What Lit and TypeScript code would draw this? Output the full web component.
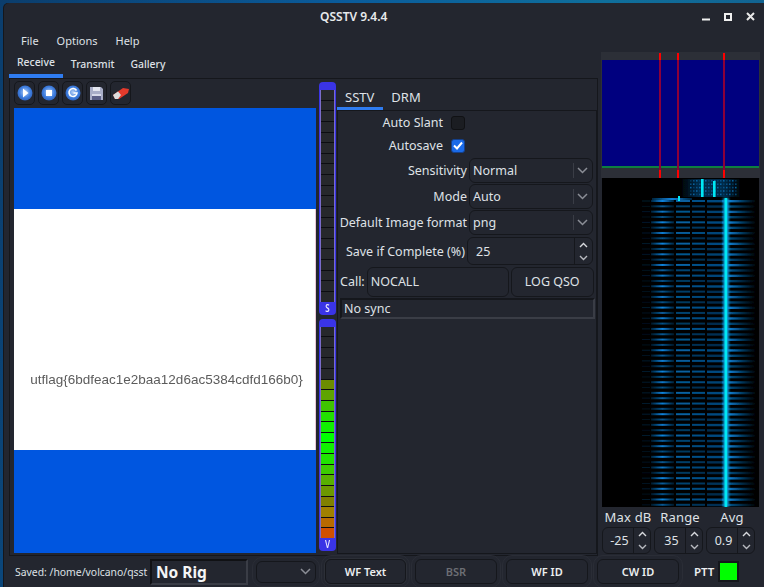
import { LitElement, css, html, svg } from 'lit';
import { customElement } from 'lit/decorators.js';

const chevronDown = html`<svg class="chev" width="11" height="7" viewBox="0 0 11 7"><path d="M1 1l4.5 4.5L10 1" fill="none" stroke="#8b8e96" stroke-width="1.5"/></svg>`;
const spinUp = html`<svg width="9" height="6" viewBox="0 0 9 6"><path d="M1 5l3.5-3.5L8 5" fill="none" stroke="#d8dade" stroke-width="1.4"/></svg>`;
const spinDown = html`<svg width="9" height="6" viewBox="0 0 9 6"><path d="M1 1l3.5 3.5L8 1" fill="none" stroke="#b8bac0" stroke-width="1.4"/></svg>`;

const rxLevels = Array.from({ length: 20 }, () => '#26282b');
const volLevels = [
  '#26282b', '#26282b', '#26282b', '#26282b', '#26282b',
  '#6c8c00', '#5ea400', '#3fc400', '#22e000', '#10f000',
  '#00ff00', '#10f000', '#20e400', '#3ccc00', '#58b000',
  '#6c9800', '#808000', '#a08000', '#b86a00', '#d05000',
];

@customElement('sig-meter')
export class SigMeter extends LitElement {
  static properties = { label: {}, levels: { attribute: false } };
  label = '';
  levels: string[] = [];

  static styles = css`
    :host {
      display: flex;
      flex-direction: column;
      width: 17px;
      flex: 1;
      border-radius: 4px;
      background: #3a34e6;
      overflow: hidden;
    }
    .cap {
      height: 8px;
      flex: none;
    }
    .bars {
      flex: 1;
      display: flex;
      flex-direction: column;
      margin: 0 1px;
      background: #0c0d10;
      border-left: 1px solid #7a6cc8;
      border-right: 1px solid #7a6cc8;
      gap: 1px;
    }
    .bars div {
      flex: 1;
    }
    .mark {
      height: 13px;
      flex: none;
      color: #e8e6ff;
      font: 600 10px/13px 'Noto Sans', sans-serif;
      text-align: center;
      transform: scaleX(0.8);
    }
  `;

  render() {
    return html`
      <div class="cap"></div>
      <div class="bars">
        ${this.levels.map((c) => html`<div style="background:${c}"></div>`)}
      </div>
      <div class="mark">${this.label}</div>
    `;
  }
}

function waterfallRows() {
  const rows = [];
  const dims = [1, 0.65, 0.9, 0.6, 1, 0.7, 0.95, 0.6];
  for (let i = 0; i < 58; i++) {
    const y = 22 + i * 5.33;
    const a = dims[i % dims.length];
    rows.push(svg`
      <rect x="49" y=${y} width="23" height="2" fill="url(#wfHead)" opacity=${a}/>
      <rect x="74" y=${y} width="14" height="2" fill="#07609f" opacity=${a}/>
      <rect x="90" y=${y} width="13" height="2" fill="#065088" opacity=${a}/>
      <rect x="105" y=${y} width="15" height="2.4" fill="#064a80" opacity=${a}/>
      <rect x="120" y=${y} width="34" height="2.4" fill="url(#wfTail)" opacity=${a}/>
      <rect x="40" y=${y + 0.5} width="8" height="1" fill="#03203a" opacity=${a * 0.8}/>
    `);
  }
  return rows;
}

function burstDots() {
  const dots = [];
  for (let r = 0; r < 5; r++) {
    for (let c = 0; c < 16; c++) {
      dots.push(svg`<rect x=${88 + c * 3} y=${2 + r * 3.4} width="1.6" height="1.6" fill="#0a6cb0" opacity=${0.35 + ((r + c) % 3) * 0.25}/>`);
    }
  }
  return dots;
}

@customElement('app-root')
export class AppRoot extends LitElement {
  static styles = css`
    :host {
      display: block;
      width: 764px;
      height: 587px;
      overflow: hidden;
      padding: 3px 0 0 4px;
      box-sizing: border-box;
      background: linear-gradient(100deg, #0b3d6c 0%, #0a5c9c 40%, #0f6f9c 70%, #145d8c 100%);
      font: 12.5px 'Noto Sans', sans-serif;
      color: #dfe1e6;
    }
    * {
      box-sizing: border-box;
    }
    .window {
      height: 584px;
      display: flex;
      flex-direction: column;
      background: #23262f;
      border-radius: 5px 0 0 0;
      box-shadow: -1px 0 0 #15171c;
    }
    .title {
      height: 27px;
      flex: none;
      display: flex;
      align-items: center;
      justify-content: flex-end;
      position: relative;
      padding-right: 9px;
      gap: 14px;
    }
    .title span {
      position: absolute;
      left: 316px;
      font-size: 12px;
      font-weight: 600;
      color: #e8eaec;
    }
    .menu {
      height: 21px;
      flex: none;
      display: flex;
      align-items: center;
      gap: 18px;
      padding-left: 17px;
      font-size: 11px;
    }
    .body {
      flex: 1;
      min-height: 0;
      display: flex;
      padding-left: 5px;
    }
    .left {
      width: 592px;
      display: flex;
      flex-direction: column;
    }
    .tabs {
      display: flex;
      flex: none;
      height: 27px;
      align-items: stretch;
      font-size: 10.4px;
      font-weight: 500;
    }
    .tabs div {
      display: flex;
      align-items: center;
      padding: 3px 8px 0;
      border-bottom: 4px solid transparent;
    }
    .tabs .on {
      border-bottom-color: #2f7cf0;
      padding: 0 8px 2px;
    }
    .pane {
      flex: 1;
      min-height: 0;
      display: flex;
      border: 1px solid #15171c;
      padding-left: 4px;
      margin-right: 3px;
    }
    .view {
      width: 302px;
      display: flex;
      flex-direction: column;
    }
    .toolbar {
      display: flex;
      gap: 3px;
      height: 29px;
      flex: none;
      padding-top: 2px;
    }
    .tool {
      width: 21px;
      height: 24px;
      border: 1px solid #15171c;
      border-radius: 5px;
      display: flex;
      align-items: center;
      justify-content: center;
    }
    .picture {
      height: 445px;
      display: flex;
      flex-direction: column;
      flex: none;
    }
    .blue {
      background: #0056e0;
    }
    .top-blue {
      height: 101px;
    }
    .bottom-blue {
      flex: 1;
    }
    .white {
      height: 241px;
      background: #fff;
      border-right: 1px solid #e8c8d8;
      display: flex;
      align-items: center;
      justify-content: center;
      padding: 100px 0 0 4px;
    }
    .flag {
      font: 13.5px 'Liberation Sans', sans-serif;
      color: #5c5c5c;
      filter: blur(0.5px);
      white-space: nowrap;
    }
    .meters {
      width: 17px;
      margin: 3px 1px 4px 3px;
      display: flex;
      flex-direction: column;
      gap: 4px;
      flex: none;
    }
    .side {
      flex: 1;
      display: flex;
      flex-direction: column;
      padding-top: 6px;
      min-width: 0;
    }
    .subtabs {
      height: 25px;
      flex: none;
      display: flex;
      font-size: 13px;
    }
    .subtabs div {
      padding: 0 8px;
      line-height: 25px;
    }
    .subtabs .on {
      border-bottom: 3px solid #2f7cf0;
      height: 25px;
      padding-right: 9px;
    }
    .frame {
      flex: 1;
      border: 1px solid #15171c;
      display: flex;
      flex-direction: column;
      padding: 0 3px 0 1px;
      margin-bottom: 1px;
    }
    .check {
      height: 23px;
      flex: none;
      display: flex;
      align-items: center;
      justify-content: flex-end;
      gap: 8px;
      padding-right: 128px;
    }
    .box {
      width: 14px;
      height: 14px;
      border: 1px solid #101114;
      border-radius: 3px;
      background: #1b1d22;
      display: flex;
      align-items: center;
      justify-content: center;
    }
    .box.on {
      background: #1a6ae8;
      border-color: #14408c;
    }
    .row {
      display: flex;
      align-items: center;
      justify-content: flex-end;
      gap: 2px;
      height: 26px;
      flex: none;
    }
    .row label {
      white-space: nowrap;
    }
    .combo {
      width: 124px;
      height: 25px;
      border: 1px solid #15171c;
      border-radius: 6px;
      display: flex;
      align-items: center;
      padding-left: 3px;
      justify-content: space-between;
      position: relative;
    }
    .combo .drop {
      width: 18px;
      height: 15px;
      border-left: 1px solid #3a3d46;
      display: flex;
      align-items: center;
      justify-content: center;
      margin-right: 1px;
    }
    .spin {
      display: flex;
      height: 28px;
      border: 1px solid #15171c;
      border-radius: 6px;
      align-items: center;
    }
    .spin .num {
      flex: 1;
      text-align: left;
    }
    .spin .arrows {
      align-self: stretch;
      display: flex;
      flex-direction: column;
      align-items: center;
      justify-content: space-around;
      border-left: 1px solid #15171c;
      width: 18px;
      flex: none;
    }
    .save {
      height: 28px;
      margin-top: 2px;
    }
    .save .spin {
      width: 126px;
      padding-left: 8px;
    }
    .call {
      height: 31px;
      margin-top: 1px;
      gap: 0;
      justify-content: flex-start;
      padding-left: 1px;
    }
    .input {
      width: 142px;
      height: 30px;
      flex: none;
      margin-left: 2px;
      border: 1px solid #15171c;
      border-radius: 6px;
      padding-left: 3px;
      display: flex;
      align-items: center;
    }
    .btn {
      border: 1px solid #15171c;
      border-radius: 6px;
      display: flex;
      align-items: center;
      justify-content: center;
    }
    .log {
      width: 83px;
      height: 30px;
      flex: none;
      margin-left: 2px;
    }
    .status {
      height: 21px;
      flex: none;
      margin: 1px 0 0 1px;
      border: 2px solid #15171c;
      border-right-color: #3a3d46;
      border-bottom-color: #3a3d46;
      width: 255px;
      padding-left: 2px;
      line-height: 17px;
    }
    .right {
      width: 160px;
      display: flex;
      flex-direction: column;
      padding-top: 1px;
    }
    .scope {
      height: 126px;
      flex: none;
      position: relative;
      display: flex;
      flex-direction: column;
      margin: 0 1px 0 0;
      background: #2c2f37;
      border: 1px solid #2c2f37;
      border-bottom: 0;
    }
    .navy {
      height: 108px;
      margin-top: 7px;
      background: #00007f;
      border-bottom: 2px solid #0d7f40;
    }
    .marker {
      position: absolute;
      top: 0;
      bottom: 0;
      width: 2px;
      background: linear-gradient(#f00 7px, #8b0038 7px, #8b0038 117px, #f00 117px);
    }
    .fall {
      display: block;
      margin: 0 2px 0 1px;
      flex: none;
      background: #000;
    }
    .stat-labels {
      display: grid;
      grid-template-columns: 52px 52px 52px;
      height: 20px;
      flex: none;
      text-align: center;
      line-height: 20px;
      font-size: 13px;
      letter-spacing: 0.2px;
      padding-left: 1px;
    }
    .stats {
      display: flex;
      gap: 3px;
      padding-left: 1px;
    }
    .stats .spin {
      width: 49px;
      height: 27px;
      justify-content: center;
      padding-left: 3px;
    }
    .stats .num {
      text-align: center;
    }
    .stats .arrows {
      width: 17px;
    }
    .bar {
      height: 31px;
      flex: none;
      display: flex;
      align-items: center;
      padding-left: 11px;
      font-size: 10.4px;
    }
    .saved {
      width: 135px;
      flex: none;
      white-space: nowrap;
    }
    .rig {
      width: 98px;
      height: 26px;
      flex: none;
      border: 2px solid #101114;
      border-right-color: #3a3d46;
      border-bottom-color: #3a3d46;
      font-size: 15.5px;
      font-weight: 700;
      line-height: 22px;
      padding-left: 4px;
      color: #f4f5f6;
    }
    .rig-combo {
      width: 60px;
      height: 22px;
      flex: none;
      margin-left: 8px;
      border: 1px solid #15171c;
      border-radius: 6px;
      display: flex;
      align-items: center;
      justify-content: flex-end;
      padding-right: 4px;
      outline: 1px solid #2a2d36;
      outline-offset: 3px;
    }
    .rig-combo .chev {
      margin-left: 4px;
    }
    .act {
      width: 82px;
      height: 25px;
      flex: none;
      font-size: 11px;
      font-weight: 600;
      color: #eceef0;
      margin-left: 9px;
      outline: 1px solid #2a2d36;
      outline-offset: 3px;
    }
    .act.first {
      width: 81px;
      box-shadow: 0 0 0 1px #2c2f37;
    }
    .act.off {
      color: #6c6e74;
    }
    .ptt {
      margin-left: 15px;
      font-weight: 600;
      font-size: 11.5px;
      color: #eceef0;
    }
    .led {
      width: 17px;
      height: 17px;
      margin-left: 6px;
      background: #00ff00;
      box-shadow: 0 0 0 2px #15171c;
      flex: none;
    }
  `;

  private marker(x: number) {
    return html`<div class="marker" style="left:${x}px"></div>`;
  }

  private playIcon(glyph: unknown) {
    return html`<svg width="16" height="16" viewBox="0 0 16 16">
      <circle cx="8" cy="8" r="7.5" fill="url(#orb)"/>
      ${glyph}
      <defs>
        <radialGradient id="orb" cx="0.5" cy="0.45" r="0.6">
          <stop offset="0" stop-color="#b8d0f4"/>
          <stop offset="0.6" stop-color="#3f7fe0"/>
          <stop offset="1" stop-color="#2c5cb4"/>
        </radialGradient>
      </defs>
    </svg>`;
  }

  render() {
    return html`
      <div class="window">
        <div class="title">
          <span>QSSTV 9.4.4</span>
          <svg width="8" height="8" viewBox="0 0 8 8"><rect y="5.5" width="8" height="2" fill="#f0f0f0"/></svg>
          <svg width="8" height="8" viewBox="0 0 8 8"><rect x="1" y="1" width="6" height="6" fill="none" stroke="#f0f0f0" stroke-width="2"/></svg>
          <svg width="9" height="9" viewBox="0 0 9 9"><path d="M1 1l7 7M8 1L1 8" stroke="#e8e8e8" stroke-width="2"/></svg>
        </div>
        <div class="menu"><span>File</span><span>Options</span><span>Help</span></div>
        <div class="body">
          <div class="left">
            <div class="tabs">
              <div class="on">Receive</div>
              <div>Transmit</div>
              <div>Gallery</div>
            </div>
            <div class="pane">
              <div class="view">
                <div class="toolbar">
                  <div class="tool">${this.playIcon(svg`<path d="M6 3.5v9L11.5 8z" fill="#fff"/>`)}</div>
                  <div class="tool">${this.playIcon(svg`<rect x="5" y="5" width="6" height="6" fill="#fff"/>`)}</div>
                  <div class="tool">${this.playIcon(svg`<path d="M11.5 5.5A4 4 0 1 0 12 8H8.5" fill="none" stroke="#fff" stroke-width="1.6"/>`)}</div>
                  <div class="tool">
                    <svg width="15" height="15" viewBox="0 0 15 15">
                      <path d="M1 1h11l2 2v11H1z" fill="#a9aec8"/>
                      <rect x="4" y="1" width="7" height="4" fill="#e4e6f0"/>
                      <rect x="3" y="8" width="9" height="6" fill="#5c6088"/>
                      <rect x="3" y="8" width="9" height="2" fill="#d8daea"/>
                    </svg>
                  </div>
                  <div class="tool">
                    <svg width="18" height="14" viewBox="0 0 18 14">
                      <path d="M1 9l10-7 6 1-1 4-9 6H3z" fill="#e43a2c"/>
                      <path d="M1 9l5-3.4 3 3.4-3 4H3z" fill="#dcdcdc"/>
                    </svg>
                  </div>
                </div>
                <div class="picture">
                  <div class="blue top-blue"></div>
                  <div class="white"><span class="flag">utflag{6bdfeac1e2baa12d6ac5384cdfd166b0}</span></div>
                  <div class="blue bottom-blue"></div>
                </div>
              </div>
              <div class="meters">
                <sig-meter label="S" .levels=${rxLevels}></sig-meter>
                <sig-meter label="V" .levels=${volLevels}></sig-meter>
              </div>
              <div class="side">
                <div class="subtabs">
                  <div class="on">SSTV</div>
                  <div>DRM</div>
                </div>
                <div class="frame">
                  <div class="check"><label>Auto Slant</label><div class="box"></div></div>
                  <div class="check">
                    <label>Autosave</label>
                    <div class="box on">
                      <svg width="10" height="9" viewBox="0 0 10 9"><path d="M1 4.5L4 7.5 9 1.5" fill="none" stroke="#fff" stroke-width="2"/></svg>
                    </div>
                  </div>
                  <div class="row"><label>Sensitivity</label><div class="combo">Normal<div class="drop">${chevronDown}</div></div></div>
                  <div class="row"><label>Mode</label><div class="combo">Auto<div class="drop">${chevronDown}</div></div></div>
                  <div class="row"><label>Default Image format</label><div class="combo">png<div class="drop">${chevronDown}</div></div></div>
                  <div class="row save">
                    <label>Save if Complete (%)</label>
                    <div class="spin"><span class="num">25</span><div class="arrows">${spinUp}${spinDown}</div></div>
                  </div>
                  <div class="row call">
                    <label>Call:</label>
                    <div class="input">NOCALL</div>
                    <div class="btn log">LOG QSO</div>
                  </div>
                  <div class="status">No sync</div>
                </div>
              </div>
            </div>
          </div>
          <div class="right">
            <div class="scope">
              <div class="navy"></div>
              ${this.marker(57)}${this.marker(75)}${this.marker(121)}
            </div>
            <svg class="fall" width="157" height="329" viewBox="0 0 157 329">
              <defs>
                <linearGradient id="wfHead">
                  <stop offset="0" stop-color="#02243e"/>
                  <stop offset="0.5" stop-color="#0c84de"/>
                  <stop offset="1" stop-color="#02243e"/>
                </linearGradient>
                <linearGradient id="wfTail">
                  <stop offset="0" stop-color="#0870b8"/>
                  <stop offset="0.25" stop-color="#0a78c8"/>
                  <stop offset="0.6" stop-color="#053c64"/>
                  <stop offset="1" stop-color="#000"/>
                </linearGradient>
                <linearGradient id="wfBurst">
                  <stop offset="0" stop-color="#000"/>
                  <stop offset="0.3" stop-color="#042a48"/>
                  <stop offset="0.7" stop-color="#042a48"/>
                  <stop offset="1" stop-color="#000"/>
                </linearGradient>
                <filter id="soft" x="-5%" y="-5%" width="110%" height="110%"><feGaussianBlur stdDeviation="0.5"/></filter>
                <filter id="glow" x="-200%" width="500%"><feGaussianBlur stdDeviation="1"/></filter>
              </defs>
              <g filter="url(#soft)">
                <rect x="78" y="1" width="62" height="18" fill="url(#wfBurst)"/>
                ${burstDots()}
                <rect x="50" y="20" width="40" height="2" fill="url(#wfHead)"/>
                ${waterfallRows()}
              </g>
              <rect x="121" y="20" width="6" height="309" fill="#0a90c8" filter="url(#glow)"/>
              <rect x="122.6" y="20" width="2.6" height="309" fill="#00e8f4"/>
              <rect x="99" y="1" width="2.6" height="18" fill="#00e8f4"/>
              <rect x="111" y="3" width="2.6" height="16" fill="#00e8f4"/>
              <rect x="76" y="18" width="2" height="5" fill="#00e8f4"/>
            </svg>
            <div class="stat-labels"><span>Max dB</span><span>Range</span><span>Avg</span></div>
            <div class="stats">
              <div class="spin"><span class="num">-25</span><div class="arrows">${spinUp}${spinDown}</div></div>
              <div class="spin"><span class="num">35</span><div class="arrows">${spinUp}${spinDown}</div></div>
              <div class="spin"><span class="num">0.9</span><div class="arrows">${spinUp}${spinDown}</div></div>
            </div>
          </div>
        </div>
        <div class="bar">
          <span class="saved">Saved: /home/volcano/qsst</span>
          <div class="rig">No Rig</div>
          <div class="rig-combo">${chevronDown}</div>
          <div class="btn act first">WF Text</div>
          <div class="btn act off">BSR</div>
          <div class="btn act">WF ID</div>
          <div class="btn act">CW ID</div>
          <span class="ptt">PTT</span>
          <div class="led"></div>
        </div>
      </div>
    `;
  }
}
